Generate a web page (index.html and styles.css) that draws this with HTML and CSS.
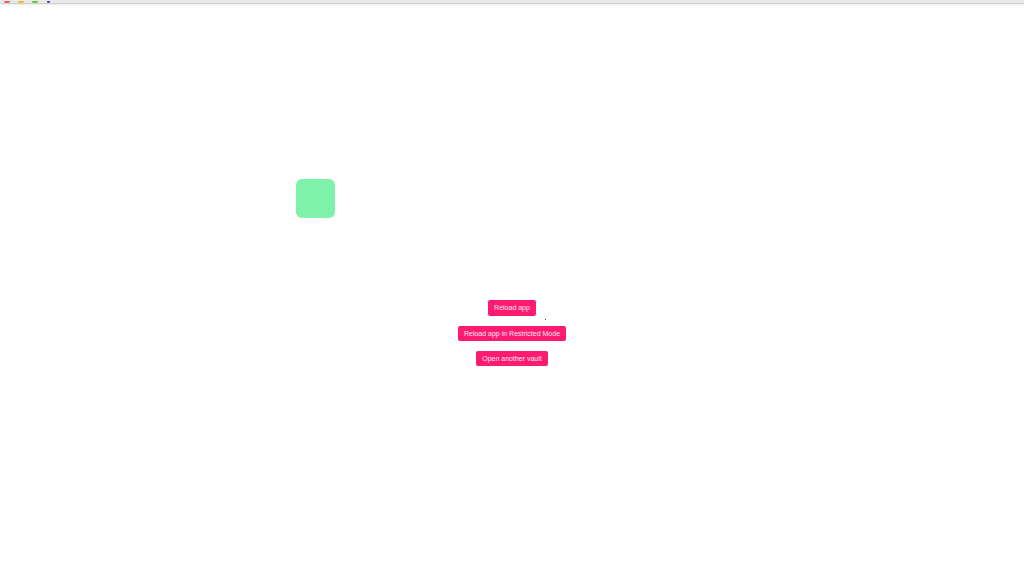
FILE: index.html
```html
<!DOCTYPE html>
<html>
<head>
<meta charset="utf-8">
<link rel="stylesheet" href="styles.css">
</head>
<body>
<div class="topbar">
  <span class="light red"></span>
  <span class="light orange"></span>
  <span class="light green"></span>
  <span class="light purple"></span>
</div>
<main class="stage">
  <div class="logo"></div>
  <div class="actions">
    <button class="btn">Reload app</button>
    <button class="btn">Reload app in Restricted Mode</button>
    <button class="btn">Open another vault</button>
    <span class="dot"></span>
  </div>
</main>
</body>
</html>
```
FILE: styles.css
```css
html, body {
  margin: 0;
  padding: 0;
  background: #ffffff;
  font-family: "Liberation Sans", Arial, sans-serif;
}
.topbar {
  height: 3px;
  background: #e9e9e9;
  box-shadow: 0 1px 2px rgba(0,0,0,0.25);
  display: flex;
  align-items: flex-end;
  padding-left: 4px;
  gap: 8px;
  position: relative;
}
.light {
  width: 6px;
  height: 2px;
  border-radius: 0 0 3px 3px;
}
.red { background: #f25b55; }
.orange { background: #f7b52d; }
.green { background: #5ec63f; }
.purple { background: #5a3fb5; width: 3px; margin-left: 1px; }
.stage {
  display: flex;
  flex-direction: column;
  padding-top: 176px;
}
.logo {
  width: 39px;
  height: 39px;
  margin-left: 296px;
  border-radius: 6px;
  background: #7ef2a9;
}
.actions {
  position: relative;
  margin-top: 82px;
  display: flex;
  flex-direction: column;
  align-items: center;
  gap: 10px;
}
.btn {
  font-family: "Liberation Sans", Arial, sans-serif;
  font-size: 7px;
  height: 15px;
  line-height: 15px;
  padding: 0 6px;
  border: none;
  border-radius: 2px;
  background: #fd1b72;
  color: #fde6ef;
  margin: 0;
}
.btn:first-child { height: 16px; line-height: 16px; }
.dot {
  position: absolute;
  left: 545px;
  top: 19px;
  width: 1px;
  height: 1px;
  background: #6b3a4a;
}
```
